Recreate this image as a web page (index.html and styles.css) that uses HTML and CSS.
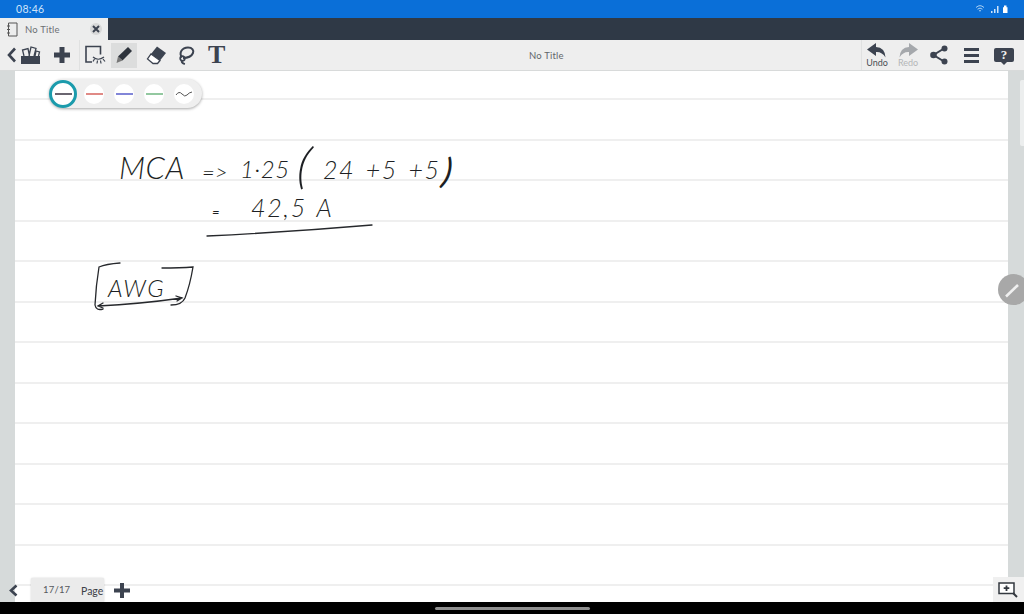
FILE: index.html
```html
<!DOCTYPE html>
<html lang="en">
<head>
<meta charset="utf-8">
<title>No Title</title>
<link rel="stylesheet" href="styles.css">
</head>
<body>
<div class="app">
  <header class="status">
    <span class="clock">08:46</span>
    <svg class="status-icons" width="34" height="10" viewBox="0 0 34 10">
      <g fill="none" stroke="#a9d0f5" stroke-width="1"><path d="M1 3.500Q5-.2 9 3.500M2.500 5.200Q5 3 7.500 5.200M4 7Q5 6 6 7"/></g>
      <path d="M16 7h1.500v2H16zM19 5h1.500v4H19zM22 2h1.500v7H22z" fill="#cfe4fa"/>
      <path d="M28 3.200h1v-1.700h2.500v1.700h1v5.800h-4.500z" fill="#fff"/>
    </svg>
  </header>
  <div class="tabs">
    <div class="tab">
      <svg width="12" height="15" viewBox="0 0 12 15"><path d="M2.500 1h8.500v13H2.500zM1 4h3M1 7.500h3M1 11h3" fill="none" stroke="#555" stroke-width="1"/></svg>
      <span class="tab-title">No Title</span>
      <span class="tab-close"><svg width="8" height="8" viewBox="0 0 8 8"><path d="M1 1l6 6M7 1L1 7" stroke="#3c4350" stroke-width="2"/></svg></span>
    </div>
  </div>
  <nav class="toolbar">
    <div class="tools">
      <svg class="tool-back" width="9" height="16" viewBox="0 0 9 16"><path d="M8 1.500L2 8l6 6.500" fill="none" stroke="#3c4350" stroke-width="2.600"/></svg>
      <svg class="tool-box" width="21" height="19" viewBox="0 0 21 19"><path d="M1 10h19v8H1z" fill="#3c4350"/><path d="M4 10L2.500 4 8 2.500 9.500 10M9 10l2-9 5 1.500L14 10M15 10l1-5 3.500 1-1 4" fill="#eee" stroke="#3c4350" stroke-width="1.300"/></svg>
      <svg class="tool-plus" width="18" height="18" viewBox="0 0 18 18"><path d="M6.500 1h5v5.500H17v5h-5.500V17h-5v-5.500H1v-5h5.500z" fill="#3c4350"/></svg>
      <span class="sep"></span>
      <svg class="tool-page" width="21" height="20" viewBox="0 0 21 20"><path d="M7 17H1V1.500h14.500v8" fill="none" stroke="#3c4350" stroke-width="1.600"/><path d="M8 12q5 4.500 11 0M9.500 14l-1.500 2.500M12.500 15.500l-.5 3M15.500 15.500l.5 3M18 14l2 2.500" fill="none" stroke="#3c4350" stroke-width="1.200"/></svg>
      <span class="tool-active"><svg width="20" height="20" viewBox="0 0 20 20"><path d="M14 2l4 4-9.500 9.500-4.500-4z" fill="#2e343d"/><path d="M4 11.500l4.500 4-6 2.500z" fill="#777"/></svg></span>
      <svg class="tool-eraser" width="21" height="20" viewBox="0 0 21 20"><path d="M11 1.500l9 6.500-6 7.500-9-6.500z" fill="#3c4350"/><path d="M5 9l9 6.500-2.500 3H7L1.500 14z" fill="#fff" stroke="#3c4350" stroke-width="1.300"/></svg>
      <svg class="tool-lasso" width="17" height="19" viewBox="0 0 17 19"><path d="M4 11.500C.5 7 4 1.500 10 1.500c4.500 0 6 3 5 5.500-1.500 3.500-6 5-10 5" fill="none" stroke="#3c4350" stroke-width="2"/><circle cx="4.500" cy="12.500" r="2.300" fill="none" stroke="#3c4350" stroke-width="1.700"/><path d="M3.500 15q.5 2.500 3.500 3" fill="none" stroke="#3c4350" stroke-width="1.700"/></svg>
      <span class="tool-t">T</span>
    </div>
    <span class="doc-title">No Title</span>
    <div class="actions">
      <span class="sep"></span>
      <div class="labelled">
        <svg width="20" height="15" viewBox="0 0 20 15"><path d="M9 0L0 6.500 9 13V9q6-.5 9.500 5.500Q18 4.500 9 4z" fill="#3c4350"/></svg>
        <span class="label">Undo</span>
      </div>
      <div class="labelled is-off">
        <svg width="20" height="15" viewBox="0 0 20 15"><path d="M11 0l9 6.500L11 13V9Q5 8.500 1.500 14.500 2 4.500 11 4z" fill="#a5a8ac"/></svg>
        <span class="label">Redo</span>
      </div>
      <svg class="act-share" width="18" height="20" viewBox="0 0 18 20"><path d="M14 3.500L3.500 10 14 16.500" fill="none" stroke="#3c4350" stroke-width="2"/><circle cx="14.500" cy="3.500" r="3" fill="#3c4350"/><circle cx="3.500" cy="10" r="3.300" fill="#3c4350"/><circle cx="14.500" cy="16.500" r="3" fill="#3c4350"/></svg>
      <svg class="act-menu" width="15" height="15" viewBox="0 0 15 15"><path d="M0 0h15v3H0zM0 6h15v3H0zM0 12h15v3H0z" fill="#3c4350"/></svg>
      <span class="act-help">?</span>
    </div>
  </nav>
  <main class="workspace">
    <div class="gutter-left"></div>
    <div class="paper">
      <div class="rule"></div><div class="rule"></div><div class="rule"></div><div class="rule"></div><div class="rule"></div><div class="rule"></div><div class="rule"></div><div class="rule"></div><div class="rule"></div><div class="rule"></div><div class="rule"></div><div class="rule"></div><div class="rule"></div>
    </div>
    <div class="gutter-right"><span class="thumb"></span></div>

    <div class="ink ink-mca">MCA</div>
    <div class="ink ink-arrow">=&gt;</div>
    <div class="ink ink-factor">1·25</div>
    <div class="ink ink-paren">(</div>
    <div class="ink ink-sum">24 +5 +5</div>
    <div class="ink ink-close">)</div>
    <div class="ink ink-eq">=</div>
    <div class="ink ink-result">42,5 A</div>
    <div class="ink ink-awg">AWG</div>
    <svg class="ink-lines" width="1024" height="614" viewBox="0 0 1024 614">
      <g fill="none" stroke="#26282c" stroke-width="1.300" stroke-linecap="round">
        <path d="M207 236Q290 232 372 225"/>
        <path d="M120 263Q106 264 99 267 96 285 95 305 96 311 103 309"/>
        <path d="M162 268Q180 268 193 267 190 285 185 298 182 305 171 305"/>
        <path d="M98 306Q140 304 182 298M103 303l-5 3 5 2M176 296l6 2-5 3"/>
      </g>
    </svg>

    <div class="palette">
      <span class="swatch is-selected"><i class="stroke stroke-dark"></i></span>
      <span class="swatch"><i class="stroke stroke-red"></i></span>
      <span class="swatch"><i class="stroke stroke-blue"></i></span>
      <span class="swatch"><i class="stroke stroke-green"></i></span>
      <span class="swatch"><svg width="18" height="8" viewBox="0 0 18 8"><path d="M1 5Q4 .5 7 4t5 1 5-3" fill="none" stroke="#555" stroke-width="1"/></svg></span>
    </div>
    <span class="fab"><svg width="16" height="16" viewBox="0 0 16 16"><path d="M2 14.500L14 3" stroke="#f0f0f0" stroke-width="2.600" fill="none"/></svg></span>

    <div class="pager">
      <svg class="pager-back" width="10" height="13" viewBox="0 0 10 13"><path d="M8.500 1.500L3 6.500l5.500 5" fill="none" stroke="#3c4350" stroke-width="2.600"/></svg>
      <div class="pager-tab"><span class="pager-num">17/17</span><span class="pager-word">Page</span></div>
      <svg class="pager-plus" width="16" height="15" viewBox="0 0 16 15"><path d="M6 0h4v5.500h6v4h-6V15H6V9.500H0v-4h6z" fill="#3c4350"/></svg>
    </div>
    <div class="zoom-tab"><svg width="20" height="16" viewBox="0 0 20 16"><path d="M1 1h15v10.500H1z" fill="#fff" stroke="#33383f" stroke-width="1.500"/><path d="M8.500 3.500v5.500M5.700 6.200h5.600" stroke="#33383f" stroke-width="1.800"/><path d="M15 11l4 4" stroke="#33383f" stroke-width="2"/></svg></div>
  </main>
  <footer class="navbar"><span class="home"></span></footer>
</div>
</body>
</html>
```
FILE: styles.css
```css
* { box-sizing: border-box; }
html, body { margin: 0; padding: 0; }
body { width: 1024px; height: 614px; overflow: hidden; background: #000; font-family: "Lato", "Open Sans", sans-serif; }
.app { width: 1024px; height: 614px; display: flex; flex-direction: column; }

.status { height: 18px; flex: none; background: #0a6fd8; display: flex; align-items: center; justify-content: space-between; padding: 0 15px 0 16px; }
.clock { color: #cfe4fa; font-size: 10.500px; letter-spacing: .3px; }
.status-icons { display: block; }

.tabs { height: 22px; flex: none; background: #2f3946; }
.tab { width: 108px; height: 22px; background: #eceded; display: flex; align-items: center; padding: 0 6px; }
.tab-title { margin-left: 7px; font-size: 9.500px; color: #6d7074; letter-spacing: .2px; flex: 1; }
.tab-close { width: 12px; height: 12px; border-radius: 50%; background: #d7d8d8; display: flex; align-items: center; justify-content: center; }

.toolbar { height: 31px; flex: none; background: #eeeeee; border-bottom: 1px solid #d8dada; display: flex; align-items: center; position: relative; }
.tools { display: flex; align-items: center; height: 100%; padding-left: 7px; }
.tool-back { margin-right: 4px; }
.tool-plus { margin-left: 12px; }
.sep { width: 1px; height: 30px; background: #e0e1e1; display: block; }
.tools .sep { margin-left: 8px; }
.tool-page { margin-left: 5px; }
.tool-active { width: 26px; height: 25px; margin-left: 5px; background: #dcdddd; display: flex; align-items: center; justify-content: center; }
.tool-eraser { margin-left: 9px; }
.tool-lasso { margin-left: 11px; }
.tool-t { margin-left: 13px; font: bold 26px/1 "Liberation Serif", serif; color: #3c4350; }
.doc-title { position: absolute; left: 529px; top: 10px; font-size: 9.500px; color: #62666a; letter-spacing: .2px; }
.actions { margin-left: auto; display: flex; align-items: center; height: 100%; padding-right: 10px; }
.labelled { width: 24px; margin-left: 3px; display: flex; flex-direction: column; align-items: center; }
.labelled + .labelled { margin-left: 7px; }
.label { font-size: 9px; line-height: 9px; color: #4a4e54; }
.is-off .label { color: #b4b6b8; }
.act-share { margin-left: 10px; }
.act-menu { margin-left: 16px; }
.act-help { margin-left: 15px; width: 20px; height: 14px; background: #3c4350; color: #eee; border-radius: 2px; font: bold 13px/14px "Liberation Serif", serif; text-align: center; position: relative; }
.act-help::after { content: ""; position: absolute; left: 7px; bottom: -3px; border: 3px solid transparent; border-bottom: 0; border-top-color: #3c4350; }

.workspace { flex: 1; display: flex; position: relative; min-height: 0; background: #fff; }
.gutter-left { width: 15px; background: #d6dada; }
.gutter-right { width: 16px; background: #d6dada; position: relative; }
.thumb { position: absolute; right: 0; top: 9px; width: 4px; height: 66px; background: #eceeee; border-radius: 2px 0 0 2px; }
.paper { flex: 1; background: #fff; padding-top: 27px; display: flex; flex-direction: column; gap: 38.500px; overflow: hidden; }
.rule { height: 2px; flex: none; background: #efefef; }

.ink { position: absolute; color: #1d1f23; font-family: "Lato", sans-serif; font-weight: 400; font-style: italic; white-space: nowrap; line-height: 1; }
.ink-lines { position: absolute; left: 0; top: -71px; pointer-events: none; }
.ink-mca { left: 119px; top: 81px; font-size: 31px; font-weight: 300; letter-spacing: .4px; }
.ink-arrow { left: 202px; top: 90px; font-size: 22px; font-weight: 300; }
.ink-factor { left: 240px; top: 86px; font-size: 24px; font-weight: 300; letter-spacing: .6px; }
.ink-paren { left: 298px; top: 68px; font-size: 50px; font-weight: 300; transform: rotate(8deg); }
.ink-sum { left: 323px; top: 86px; font-size: 25px; font-weight: 300; letter-spacing: 1.500px; word-spacing: 3px; }
.ink-close { left: 443px; top: 81px; font-size: 36px; font-weight: 400; transform: rotate(10deg); }
.ink-eq { left: 212px; top: 135px; font-size: 13px; }
.ink-result { left: 251px; top: 124px; font-size: 25px; font-weight: 300; letter-spacing: 1.800px; word-spacing: 2px; }
.ink-awg { left: 108px; top: 205px; font-size: 24px; font-weight: 300; letter-spacing: 1.500px; }

.palette { position: absolute; left: 49px; top: 8px; width: 153px; height: 29px; border-radius: 15px; background: #efefef; box-shadow: 0 1px 3px rgba(0,0,0,.35); display: flex; align-items: center; padding-left: 4px; gap: 10px; }
.swatch { width: 20px; height: 20px; border-radius: 50%; background: #fff; display: flex; align-items: center; justify-content: center; position: relative; }
.swatch.is-selected { width: 28px; height: 28px; margin: 0 -3px 0 -4px; border: 3px solid #1b9bac; }
.stroke { display: block; width: 17px; height: 2px; }
.stroke-dark { background: #6a6570; }
.stroke-red { background: #e08a86; }
.stroke-blue { background: #8286d8; }
.stroke-green { background: #93c8a0; }

.fab { position: absolute; left: 998px; top: 203px; width: 31px; height: 31px; border-radius: 50%; background: #a8a8a8; display: flex; align-items: center; justify-content: flex-start; padding-left: 6px; }

.pager { position: absolute; left: 8px; bottom: 0; height: 24px; display: flex; align-items: center; }
.pager-tab { margin-left: 13px; width: 73px; height: 24px; background: #ebebeb; border-radius: 2px 2px 0 0; box-shadow: 0 0 2px rgba(0,0,0,.2); display: flex; align-items: center; padding-left: 12px; }
.pager-num { font-size: 9.500px; color: #55595e; width: 38px; letter-spacing: .2px; margin-top: -2px; }
.pager-word { font-size: 10.500px; color: #3d4147; margin-top: 1px; }
.pager-plus { margin-left: 10px; }
.zoom-tab { position: absolute; right: 0; bottom: 0; width: 31px; height: 25px; background: #f0f0f0; display: flex; align-items: center; padding-left: 5px; }

.navbar { height: 12px; flex: none; background: #000; display: flex; align-items: center; justify-content: center; }
.home { width: 155px; height: 3px; border-radius: 2px; background: #8e8e8e; margin-left: 1px; }
```
